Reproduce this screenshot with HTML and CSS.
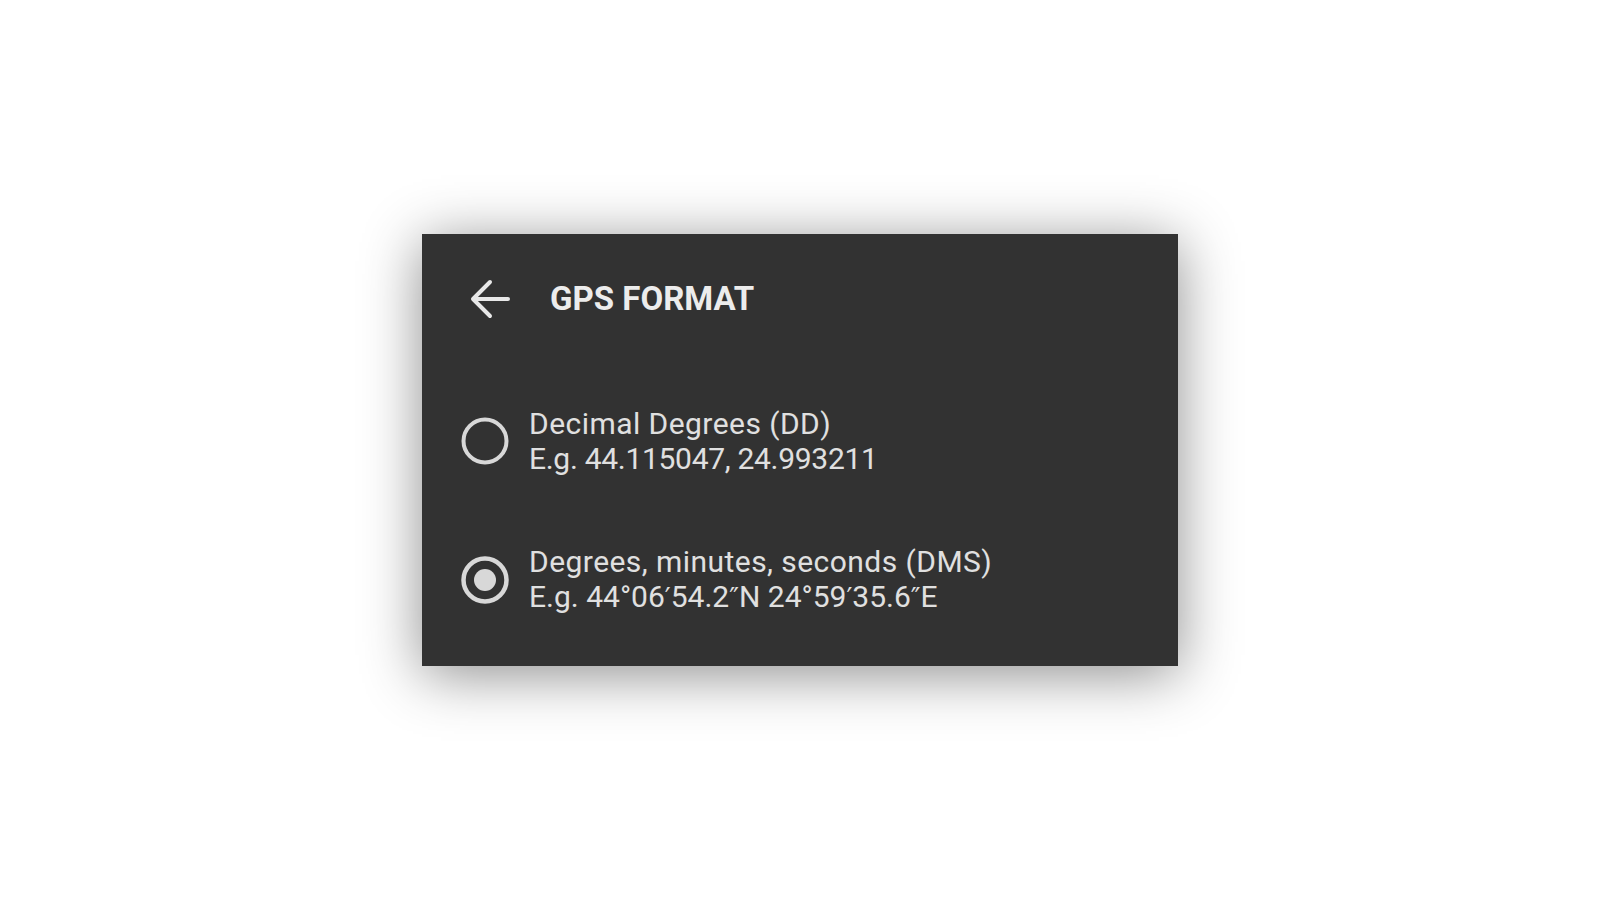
FILE: index.html
```html
<!DOCTYPE html>
<html lang="en">
<head>
    <meta charset="UTF-8">
    <meta name="viewport" content="width=device-width, initial-scale=1.0">
    <title>GPS Format</title>
    <link rel="stylesheet" href="styles.css">
</head>
<body>
    <!-- GPS format dialog -->
    <section class="panel">
        <header class="panel-header">
            <button class="back-btn" aria-label="Back">
                <svg width="40" height="40" viewBox="0 0 40 40">
                    <path d="M38 20H4 M20 3L3 20L20 37" fill="none" stroke="currentColor" stroke-width="4" stroke-linecap="round" stroke-linejoin="round"/>
                </svg>
            </button>
            <h1 class="title">GPS FORMAT</h1>
        </header>

        <div class="options">
            <label class="option">
                <svg class="radio" width="48" height="48" viewBox="0 0 48 48">
                    <circle cx="24" cy="24" r="21.5" fill="none" stroke="currentColor" stroke-width="4"/>
                </svg>
                <span class="option-text">
                    <span class="option-name">Decimal Degrees (DD)</span>
                    <span class="option-example">E.g. 44.115047, 24.993211</span>
                </span>
            </label>

            <label class="option">
                <svg class="radio" width="48" height="48" viewBox="0 0 48 48">
                    <circle cx="24" cy="24" r="21.5" fill="none" stroke="currentColor" stroke-width="4.5"/>
                    <circle cx="24" cy="24" r="11" fill="currentColor"/>
                </svg>
                <span class="option-text">
                    <span class="option-name">Degrees, minutes, seconds (DMS)</span>
                    <span class="option-example dms">E.g. 44°06<span class="prime">′</span>54.2<span class="prime">″</span>N 24°59<span class="prime">′</span>35.6<span class="prime">″</span>E</span>
                </span>
            </label>
        </div>
    </section>
</body>
</html>
```

FILE: styles.css
```css
/* base */
* {
    margin: 0;
    padding: 0;
    box-sizing: border-box;
}

body {
    width: 1600px;
    height: 900px;
    background: #ffffff;
    display: flex;
    align-items: center;
    justify-content: center;
    font-family: Roboto, 'DejaVu Sans', sans-serif;
    overflow: hidden;
}

/* dialog */
.panel {
    width: 756px;
    height: 432px;
    background: #323232;
    color: #e2e2e2;
    box-shadow: 0 8px 55px rgba(0, 0, 0, 0.45);
    padding: 45px 0 0 0;
    display: flex;
    flex-direction: column;
}

.panel-header {
    display: flex;
    align-items: center;
    gap: 40px;
    padding-left: 48px;
    height: 40px;
}

.back-btn {
    width: 40px;
    height: 40px;
    border: none;
    background: none;
    color: #e8e8e8;
    display: flex;
}

.title {
    font-size: 33px;
    font-weight: 700;
    color: #ececec;
    line-height: 40px;
}

/* options */
.options {
    display: flex;
    flex-direction: column;
    gap: 68px;
    padding-left: 39px;
    margin-top: 87px;
}

.option {
    display: flex;
    align-items: center;
    gap: 20px;
}

.radio {
    color: #d8d8d8;
    flex-shrink: 0;
}

.option-text {
    display: flex;
    flex-direction: column;
    font-size: 30px;
    line-height: 35px;
    color: #e0e0e0;
}

.option-name {
    letter-spacing: 0.45px;
}

.option-example {
    letter-spacing: -0.3px;
}

.option-example.dms {
    letter-spacing: 0;
}

/* slanted minute / second marks */
.prime {
    font-family: 'DejaVu Sans', sans-serif;
    font-size: 26px;
}
```
